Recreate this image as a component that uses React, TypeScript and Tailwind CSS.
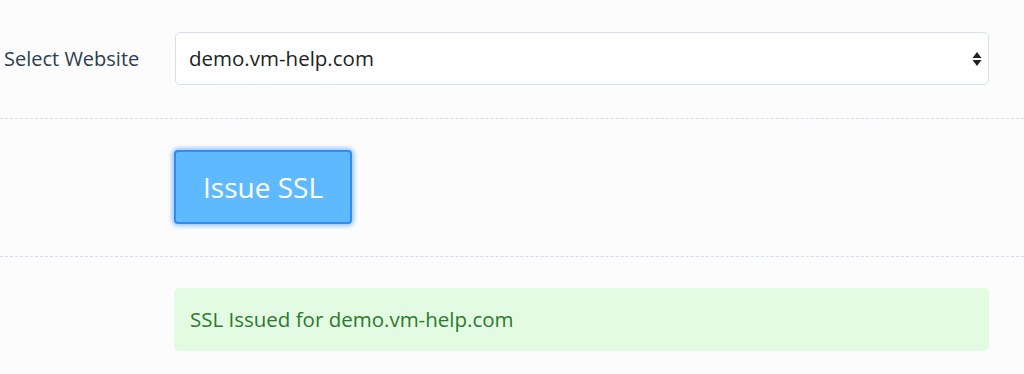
export default function App() {
  return (
    <div className="min-h-[374px] w-[1024px] bg-[#fcfcfc] font-['Open_Sans',sans-serif]">
      <div className="flex items-center pt-8 pb-[33px] border-b border-dashed border-[#d3dde9]">
        <div className="w-[175px] pl-1 text-[20px] text-[#2c3e50]">Select Website</div>
        <div className="relative w-[814px] h-[53px] flex items-center rounded-[5px] border border-[#d5e1f0] bg-white pl-[13px]">
          <span className="text-[20.5px] text-[#222]">demo.vm-help.com</span>
          <svg className="absolute right-[6px] top-[18px]" width="10" height="16" viewBox="0 0 10 16">
            <path d="M5 1 L9.5 7 H0.5 Z" fill="#222" />
            <path d="M5 15 L9.5 9 H0.5 Z" fill="#222" />
          </svg>
        </div>
      </div>

      <div className="pt-[31px] pb-8 pl-[174px] border-b border-dashed border-[#d3dde9]">
        <button className="w-[178px] h-[74px] rounded-[4px] border-2 border-[#2f8cf2] bg-[#5fb9ff] text-white text-[28px] shadow-[0_0_4px_2px_rgba(70,150,255,0.55)]">
          Issue SSL
        </button>
      </div>

      <div className="pt-[31px] pl-[174px]">
        <div className="w-[815px] h-[63px] flex items-center rounded-[5px] bg-[#e3fbe3] pl-4 text-[20.5px] text-[#2b7a2b]">
          SSL Issued for demo.vm-help.com
        </div>
      </div>
    </div>
  );
}
